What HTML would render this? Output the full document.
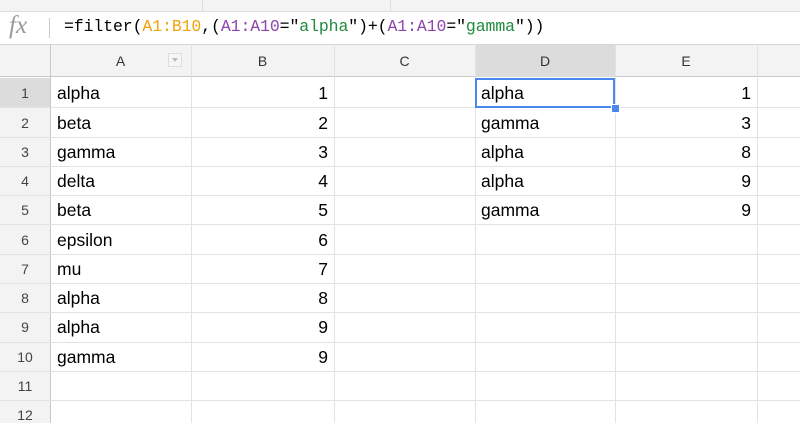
<!DOCTYPE html><html><head><style>
body{margin:0;width:800px;height:423px;overflow:hidden;background:#fff;font-family:"Liberation Sans",Arial,sans-serif;position:relative}
.a{position:absolute}
.h{position:absolute;left:0;width:800px;height:1px;background:#e2e2e2}
.v{position:absolute;width:1px;background:#e2e2e2}
.t{position:absolute;font-size:17.5px;color:#000;line-height:30px}
.r{text-align:right}
.rn{position:absolute;left:0;width:50px;text-align:center;font-size:14px;color:#444;line-height:30px}
.ch{position:absolute;top:45px;height:32px;line-height:32px;text-align:center;font-size:14px;color:#333}
</style></head><body>
<div class="a" style="left:0;top:0;width:800px;height:11px;background:#f3f3f3;border-bottom:1px solid #ddd"></div>
<div class="a" style="left:202px;top:0;width:1px;height:11px;background:#ddd"></div>
<div class="a" style="left:390px;top:0;width:1px;height:11px;background:#ddd"></div>
<div class="a" style="left:9px;top:12px;font-family:'Liberation Serif',serif;font-style:italic;font-size:25px;color:#999">fx</div>
<div class="a" style="left:49px;top:18px;width:1px;height:20px;background:#ccc"></div>
<div class="a" style="left:64px;top:15px;font-family:'Liberation Mono',monospace;font-size:16.5px;line-height:24px;color:#000;letter-spacing:-0.1px">=filter(<span style="color:#f0a30a">A1:B10</span>,(<span style="color:#8e44ad">A1:A10</span>="<span style="color:#1e8a3c">alpha</span>")+(<span style="color:#8e44ad">A1:A10</span>="<span style="color:#1e8a3c">gamma</span>"))</div>
<div class="a" style="left:0;top:44px;width:800px;height:33px;background:#f3f3f3;border-top:1px solid #d5d5d5;border-bottom:1px solid #c8c8c8;box-sizing:border-box"></div>
<div class="a" style="left:475px;top:45px;width:140px;height:32px;background:#dcdcdc"></div>
<div class="a" style="left:0;top:78px;width:50px;height:345px;background:#f3f3f3"></div>
<div class="a" style="left:0;top:78px;width:50px;height:29px;background:#dcdcdc"></div>
<div class="ch" style="left:50px;width:141px">A</div>
<div class="a" style="left:168px;top:53px;width:14px;height:14px;border:1px solid #ddd;box-sizing:border-box;background:#f6f6f6"></div>
<div class="a" style="left:172px;top:58px;border-left:3px solid transparent;border-right:3px solid transparent;border-top:4px solid #bbb"></div>
<div class="ch" style="left:191px;width:143px">B</div>
<div class="ch" style="left:334px;width:141px">C</div>
<div class="ch" style="left:475px;width:140px">D</div>
<div class="ch" style="left:615px;width:142px">E</div>
<div class="v" style="left:50px;top:44px;height:379px;background:#c8c8c8"></div>
<div class="v" style="left:191px;top:44px;height:379px"></div>
<div class="v" style="left:334px;top:44px;height:379px"></div>
<div class="v" style="left:475px;top:44px;height:379px"></div>
<div class="v" style="left:615px;top:44px;height:379px"></div>
<div class="v" style="left:757px;top:44px;height:379px"></div>
<div class="h" style="top:107px"></div><div class="h" style="top:137px"></div><div class="h" style="top:166px"></div><div class="h" style="top:195px"></div><div class="h" style="top:224px"></div><div class="h" style="top:254px"></div><div class="h" style="top:283px"></div><div class="h" style="top:312px"></div><div class="h" style="top:342px"></div><div class="h" style="top:371px"></div><div class="h" style="top:400px"></div>
<div class="rn" style="top:78px">1</div><div class="rn" style="top:108px">2</div><div class="rn" style="top:137px">3</div><div class="rn" style="top:166px">4</div><div class="rn" style="top:195px">5</div><div class="rn" style="top:225px">6</div><div class="rn" style="top:254px">7</div><div class="rn" style="top:283px">8</div><div class="rn" style="top:312px">9</div><div class="rn" style="top:342px">10</div><div class="rn" style="top:371px">11</div><div class="rn" style="top:400px">12</div>
<div class="t" style="left:57px;top:78px">alpha</div><div class="t r" style="left:191px;width:137px;top:78px">1</div>
<div class="t" style="left:57px;top:108px">beta</div><div class="t r" style="left:191px;width:137px;top:108px">2</div>
<div class="t" style="left:57px;top:137px">gamma</div><div class="t r" style="left:191px;width:137px;top:137px">3</div>
<div class="t" style="left:57px;top:166px">delta</div><div class="t r" style="left:191px;width:137px;top:166px">4</div>
<div class="t" style="left:57px;top:195px">beta</div><div class="t r" style="left:191px;width:137px;top:195px">5</div>
<div class="t" style="left:57px;top:225px">epsilon</div><div class="t r" style="left:191px;width:137px;top:225px">6</div>
<div class="t" style="left:57px;top:254px">mu</div><div class="t r" style="left:191px;width:137px;top:254px">7</div>
<div class="t" style="left:57px;top:283px">alpha</div><div class="t r" style="left:191px;width:137px;top:283px">8</div>
<div class="t" style="left:57px;top:312px">alpha</div><div class="t r" style="left:191px;width:137px;top:312px">9</div>
<div class="t" style="left:57px;top:342px">gamma</div><div class="t r" style="left:191px;width:137px;top:342px">9</div>
<div class="t" style="left:481px;top:78px">alpha</div><div class="t r" style="left:615px;width:136px;top:78px">1</div>
<div class="t" style="left:481px;top:108px">gamma</div><div class="t r" style="left:615px;width:136px;top:108px">3</div>
<div class="t" style="left:481px;top:137px">alpha</div><div class="t r" style="left:615px;width:136px;top:137px">8</div>
<div class="t" style="left:481px;top:166px">alpha</div><div class="t r" style="left:615px;width:136px;top:166px">9</div>
<div class="t" style="left:481px;top:195px">gamma</div><div class="t r" style="left:615px;width:136px;top:195px">9</div>
<div class="a" style="left:475px;top:78px;width:140px;height:30px;border:2px solid #4a87ee;box-sizing:border-box"></div>
<div class="a" style="left:611px;top:104px;width:7px;height:7px;background:#4a87ee;border:1px solid #fff"></div>
</body></html>
